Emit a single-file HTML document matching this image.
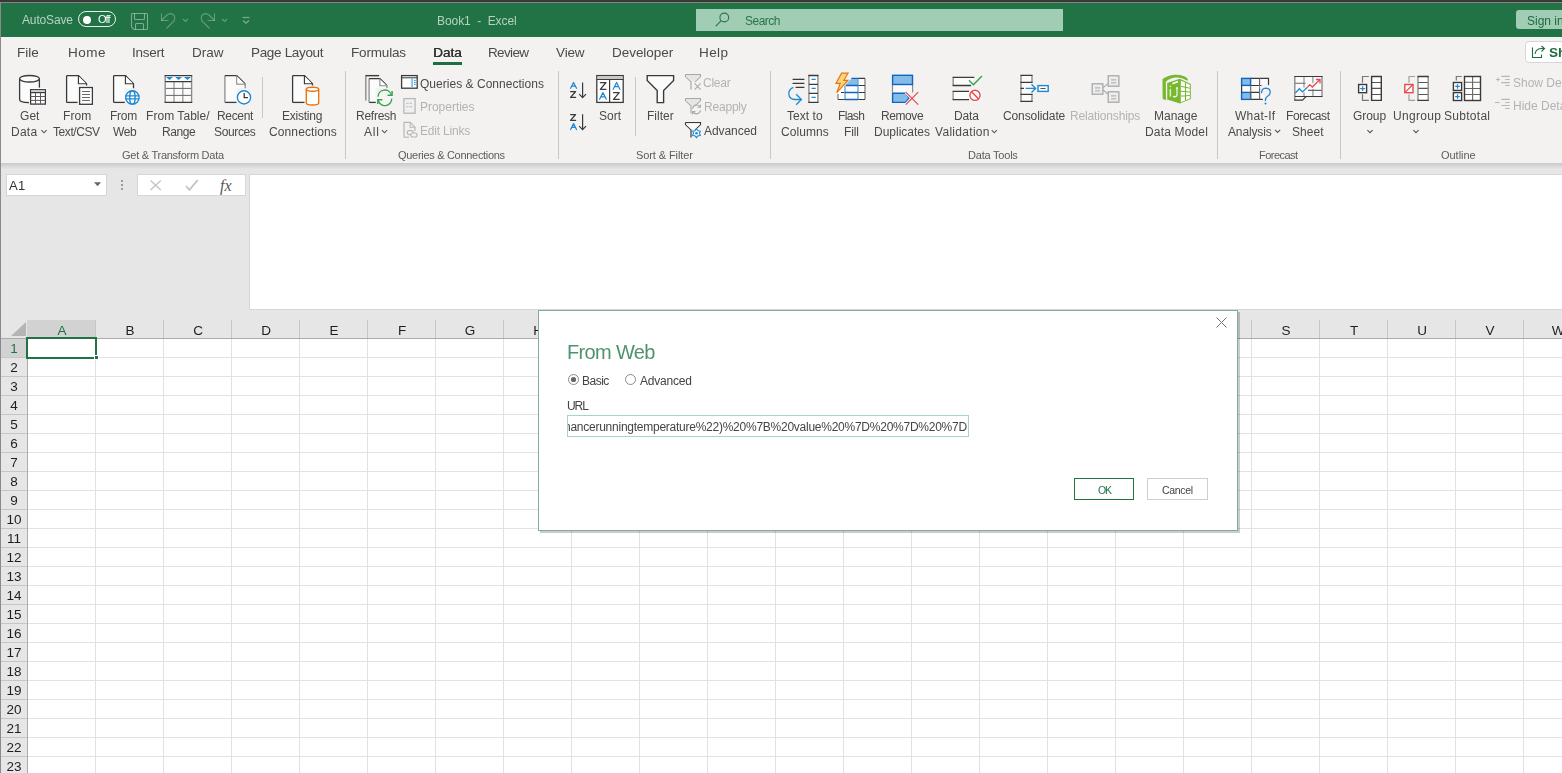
<!DOCTYPE html>
<html><head><meta charset="utf-8"><style>
html,body{margin:0;padding:0;width:1562px;height:773px;overflow:hidden;background:#fff;position:relative;font-family:"Liberation Sans", sans-serif}
.t{position:absolute;white-space:nowrap;font-family:"Liberation Sans", sans-serif;will-change:transform}
svg{overflow:visible}
</style></head><body>
<div style="position:absolute;left:0px;top:0px;width:1562px;height:2px;background:#393837"></div><div style="position:absolute;left:0px;top:2px;width:1562px;height:1px;background:#858585"></div><div style="position:absolute;left:1px;top:3px;width:1561px;height:34px;background:#217346"></div><div style="position:absolute;left:0px;top:2px;width:1px;height:771px;background:#8a8a8a"></div><div style="position:absolute;left:1px;top:37px;width:1561px;height:126px;background:#f3f2f1"></div><div style="position:absolute;left:433px;top:62px;width:29px;height:3px;background:#1e6e42"></div><div style="position:absolute;left:1px;top:163px;width:1561px;height:157px;background:#e6e6e6"></div><div style="position:absolute;left:1px;top:163px;width:1561px;height:6px;background:linear-gradient(#c9c9c9,#e6e6e6)"></div><div style="position:absolute;left:262px;top:77px;width:1px;height:41px;background:#c8c8c8"></div><div style="position:absolute;left:345px;top:71px;width:1px;height:88px;background:#c8c8c8"></div><div style="position:absolute;left:558px;top:71px;width:1px;height:88px;background:#c8c8c8"></div><div style="position:absolute;left:635px;top:77px;width:1px;height:59px;background:#c8c8c8"></div><div style="position:absolute;left:770px;top:71px;width:1px;height:88px;background:#c8c8c8"></div><div style="position:absolute;left:1217px;top:71px;width:1px;height:88px;background:#c8c8c8"></div><div style="position:absolute;left:1340px;top:71px;width:1px;height:88px;background:#c8c8c8"></div><div style="position:absolute;left:696px;top:9px;width:367px;height:22px;background:#a0cdb4"></div><div style="position:absolute;left:1516px;top:10px;width:60px;height:19px;background:#a0cdb4;border-radius:3px"></div><div style="position:absolute;left:1525px;top:41px;width:60px;height:22px;background:#ffffff;border:1px solid #d6d6d6;border-radius:4px;box-sizing:border-box"></div><div style="position:absolute;left:78px;top:11px;width:38px;height:16px;border:1.5px solid #e8f1ec;border-radius:8px;box-sizing:border-box"></div><div style="position:absolute;left:82.5px;top:15.5px;width:8px;height:8px;background:#ffffff;border-radius:50%"></div><div style="position:absolute;left:6px;top:174px;width:101px;height:22px;background:#fff;border:1px solid #d6d6d6;box-sizing:border-box"></div><div style="position:absolute;left:137px;top:174px;width:109px;height:22px;background:#fff;border:1px solid #d6d6d6;box-sizing:border-box"></div><div style="position:absolute;left:249px;top:174px;width:1313px;height:136px;background:#fff;border:1px solid #d6d6d6;border-right:none;box-sizing:border-box"></div>
<svg style="position:absolute;left:0;top:0" width="1562" height="200" viewBox="0 0 1562 200"><g fill="none" stroke="rgba(255,255,255,0.42)" stroke-width="1.1"><path d="M131.5 13.5 H146.5 Q147.5 13.5 147.5 14.5 V28.5 Q147.5 29.5 146.5 29.5 H134 L131.5 27 V14.5 Q131.5 13.5 132.5 13.5"/><path d="M134.5 13.5 V18.5 Q134.5 19.5 135.5 19.5 H143.5 Q144.5 19.5 144.5 18.5 V13.5"/><path d="M135.5 29.5 V24.5 Q135.5 23.5 136.5 23.5 H142.5 Q143.5 23.5 143.5 24.5 V29.5"/></g><g fill="none" stroke="rgba(255,255,255,0.30)" stroke-width="1.1"><path d="M161.5 13.5 V20.5 H168.5"/><path d="M161.5 20.5 L167 15 Q170 12.5 173 14.5 Q176 17 174 21 L166.5 28.5"/><path d="M183 19 L185.5 21.5 L188 19"/><path d="M214.5 13.5 V20.5 H207.5"/><path d="M214.5 20.5 L209 15 Q206 12.5 203 14.5 Q200 17 202 21 L209.5 28.5"/><path d="M222 19 L224.5 21.5 L227 19"/></g><g fill="none" stroke="rgba(255,255,255,0.42)" stroke-width="1.2"><path d="M242.5 17.5 H249.5"/><path d="M243 20.5 L246 23.2 L249 20.5"/></g><g fill="none" stroke="#2a744b" stroke-width="1.1"><circle cx="724.3" cy="17.5" r="4.4"/><path d="M721.2 20.6 L715.8 26.2"/></g><g fill="none" stroke="#1f6a40" stroke-width="1.1"><path d="M1532.5 47.5 V57.5 H1541.5 V54.5"/><path d="M1535 54 Q1536 48.5 1542 48.5 H1544"/><path d="M1541.5 46 L1544.5 48.5 L1541.5 51.5"/></g><g stroke="#3a3a3a" stroke-width="1.3" fill="#fbfbfb"><path d="M19.6 78.75 V99.5 Q21 102.6 29 102.6 H30 V89 H39.4 V78.75 Z" stroke="none"/><path d="M19.6 78.75 V99.5 Q19.6 102.6 29 102.6" fill="none"/><path d="M39.4 78.75 V87.6" fill="none"/><ellipse cx="29.5" cy="78.75" rx="9.9" ry="3.25"/></g><rect x="29.3" y="88.4" width="17.4" height="17" fill="#fdfdfd"/><rect x="30.6" y="89.7" width="14.8" height="14.4" fill="#fff" stroke="#3a3a3a" stroke-width="1.3"/><rect x="31.3" y="90.4" width="13.4" height="2" fill="#cfcfcf"/><g stroke="#5a5a5a" stroke-width="1"><path d="M30.6 92.6 H45.4" stroke="#3a3a3a" stroke-width="1.2"/><path d="M30.6 96.5 H45.4 M30.6 100.4 H45.4 M35.5 92.6 V104.1 M40.5 92.6 V104.1"/></g><path d="M66.6 75.6 H78.5 L86.6 83.69999999999999 V85.5 H77.6 V102.4 H66.6 Z" fill="#fbfbfb" stroke="none"/><path d="M77.6 102.4 H66.6" stroke="#3a3a3a" stroke-width="1.3" fill="none"/><path d="M66.6 102.4 V75.6" stroke="#3a3a3a" stroke-width="1.3" fill="none"/><path d="M66.6 75.6 H78.5 L86.6 83.69999999999999" stroke="#3a3a3a" stroke-width="1.3" fill="none" stroke-linejoin="miter"/><path d="M78.5 75.6 V83.69999999999999 H86.6" stroke="#3a3a3a" stroke-width="1.3" fill="none"/><path d="M79.1 76.8 L85.8 83.29999999999998 H79.1 Z" fill="#fff" stroke="none"/><path d="M86.6 83.69999999999999 V85.5" stroke="#3a3a3a" stroke-width="1.3" fill="none"/><rect x="78.3" y="86.2" width="15.4" height="19.4" fill="#fdfdfd"/><rect x="79.6" y="87.5" width="12.8" height="16.8" fill="#fff" stroke="#3a3a3a" stroke-width="1.3"/><g stroke="#6a6a6a" stroke-width="1"><path d="M82 91.5 H90 M82 94.5 H90 M82 97.5 H90 M82 100.5 H90"/></g><path d="M113.6 75.6 H125.5 L133.5 83.6 V88.3 H124.8 V102.4 H113.6 Z" fill="#fbfbfb" stroke="none"/><path d="M124.8 102.4 H113.6" stroke="#3a3a3a" stroke-width="1.3" fill="none"/><path d="M113.6 102.4 V75.6" stroke="#3a3a3a" stroke-width="1.3" fill="none"/><path d="M113.6 75.6 H125.5 L133.5 83.6" stroke="#3a3a3a" stroke-width="1.3" fill="none" stroke-linejoin="miter"/><path d="M125.5 75.6 V83.6 H133.5" stroke="#3a3a3a" stroke-width="1.3" fill="none"/><path d="M126.1 76.8 L132.7 83.19999999999999 H126.1 Z" fill="#fff" stroke="none"/><path d="M133.5 83.6 V88.3" stroke="#3a3a3a" stroke-width="1.3" fill="none"/><circle cx="132.4" cy="97.4" r="7.6" fill="#fdfdfd"/><g fill="#fff" stroke="#1e88d2" stroke-width="1.4"><circle cx="132.4" cy="97.4" r="6.7"/><ellipse cx="132.4" cy="97.4" rx="2.7" ry="6.7" fill="none"/><path d="M125.7 95.9 H139.1 M125.7 98.9 H139.1" fill="none"/></g><rect x="165.2" y="75.6" width="26.4" height="26.8" fill="#fbfbfb"/><rect x="165.8" y="76.2" width="25.2" height="5.2" fill="#fff"/><g stroke="#9a9a9a" stroke-width="1.3"><path d="M174 81.6 V102.4 M182.8 81.6 V102.4"/></g><g stroke="#666" stroke-width="1"><path d="M165.2 88.4 H191.6 M165.2 95.4 H191.6"/></g><g stroke="#8c8c8c" stroke-width="1.4"><path d="M165.2 75.6 V102.4 M191.6 75.6 V102.4"/></g><g stroke="#3a3a3a" stroke-width="1.3"><path d="M164.6 75.6 H192.2 M164.6 102.4 H192.2 M165.2 81.6 H191.6"/></g><g fill="#1e88d2"><path d="M166 77.1 H173 L169.5 80 Z M175.1 77.1 H182.1 L178.6 80 Z M184 77.1 H191 L187.5 80 Z"/></g><path d="M224.9 75.6 H236.8 L245.2 83.99999999999997 V88.3 H236.5 V102.4 H224.9 Z" fill="#fbfbfb" stroke="none"/><path d="M236.5 102.4 H224.9" stroke="#3a3a3a" stroke-width="1.3" fill="none"/><path d="M224.9 102.4 V75.6" stroke="#8c8c8c" stroke-width="1.3" fill="none"/><path d="M224.9 75.6 H236.8 L245.2 83.99999999999997" stroke="#3a3a3a" stroke-width="1.3" fill="none" stroke-linejoin="miter"/><path d="M236.8 75.6 V83.99999999999997 H245.2" stroke="#8c8c8c" stroke-width="1.3" fill="none"/><path d="M237.4 76.8 L244.39999999999998 83.59999999999997 H237.4 Z" fill="#fff" stroke="none"/><path d="M245.2 83.99999999999997 V88.3" stroke="#8c8c8c" stroke-width="1.3" fill="none"/><circle cx="244" cy="97.4" r="7.6" fill="#fdfdfd"/><circle cx="244" cy="97.4" r="6.6" fill="#fff" stroke="#1e88d2" stroke-width="1.4"/><path d="M244.2 93 V97.6 H248" fill="none" stroke="#3a3a3a" stroke-width="1.3"/><path d="M292.6 75.6 H304.5 L312.5 83.6 V85.5 H304.5 V102.4 H292.6 Z" fill="#fbfbfb" stroke="none"/><path d="M304.5 102.4 H292.6" stroke="#3a3a3a" stroke-width="1.3" fill="none"/><path d="M292.6 102.4 V75.6" stroke="#3a3a3a" stroke-width="1.3" fill="none"/><path d="M292.6 75.6 H304.5 L312.5 83.6" stroke="#3a3a3a" stroke-width="1.3" fill="none" stroke-linejoin="miter"/><path d="M304.5 75.6 V83.6 H312.5" stroke="#3a3a3a" stroke-width="1.3" fill="none"/><path d="M305.1 76.8 L311.7 83.19999999999999 H305.1 Z" fill="#fff" stroke="none"/><path d="M312.5 83.6 V85.5" stroke="#3a3a3a" stroke-width="1.3" fill="none"/><path d="M305.2 89.2 V103 Q312.5 106.5 319.8 103 V89.2 Z" fill="#fdfdfd"/><g stroke="#e8730f" stroke-width="1.4" fill="#fff"><path d="M306.3 89.2 V103 A6.2 2 0 0 0 318.7 103 V89.2"/><ellipse cx="312.5" cy="89.2" rx="6.2" ry="2"/></g><path d="M365.8 100.4 V75.6 H379.1" fill="none" stroke="#8c8c8c" stroke-width="1.4"/><path d="M365.8 75.6 H379.1" fill="none" stroke="#3a3a3a" stroke-width="1.3"/><path d="M369.1 78.6 H380 L387 85.6 V88 H375.8 V102.4 H369.1 Z" fill="#fbfbfb" stroke="none"/><path d="M375.8 102.4 H369.1" stroke="#3a3a3a" stroke-width="1.3" fill="none"/><path d="M369.1 102.4 V78.6" stroke="#8c8c8c" stroke-width="1.3" fill="none"/><path d="M369.1 78.6 H380 L387 85.6" stroke="#3a3a3a" stroke-width="1.3" fill="none" stroke-linejoin="miter"/><path d="M380 78.6 V85.6 H387" stroke="#8c8c8c" stroke-width="1.3" fill="none"/><path d="M380.6 79.8 L386.2 85.19999999999999 H380.6 Z" fill="#fff" stroke="none"/><path d="M387 85.6 V88" stroke="#8c8c8c" stroke-width="1.3" fill="none"/><circle cx="384.9" cy="97.4" r="7.8" fill="#f6f6f6"/><g fill="none" stroke="#34a24f" stroke-width="1.4"><path d="M378.1 96.7 A6.8 6.8 0 0 1 391.5 95.2"/><path d="M391.7 98.6 A6.8 6.8 0 0 1 378.2 100"/><path d="M392.1 91 V95.3 H387.6"/><path d="M377.8 104 V99.7 H382.4"/></g><rect x="401.6" y="75.6" width="15.6" height="12.6" fill="#fff" stroke="#3a3a3a" stroke-width="1.3"/><path d="M401.6 77.8 H417.2" stroke="#3a3a3a" stroke-width="1"/><rect x="411.3" y="78.2" width="1.7" height="9.4" fill="#83bbe9"/><g fill="#1e88d2"><rect x="414.2" y="79.9" width="1.4" height="1.1"/><rect x="414.2" y="81.9" width="1.4" height="1.1"/><rect x="414.2" y="83.8" width="1.4" height="1.1"/></g><rect x="403.9" y="98.6" width="11.2" height="14.6" fill="#f0f0f0" stroke="#b8b8b8" stroke-width="1.3"/><g stroke="#b8b8b8" stroke-width="1"><path d="M406.3 103.3 H408.6 M406.3 106.8 H408.6"/><path d="M409.6 103.3 H412 M409.6 106.8 H412"/></g><path d="M404 137.2 V122.4 H410.2 L415 127.2 V131" fill="#f0f0f0" stroke="#b8b8b8" stroke-width="1.2"/><path d="M410.2 122.4 V127.2 H415" fill="none" stroke="#b8b8b8" stroke-width="1.1"/><path d="M404 137.2 H409" stroke="#b8b8b8" stroke-width="1.2"/><g fill="#f3f2f1" stroke="#b8b8b8" stroke-width="1.1"><rect x="407.2" y="130.6" width="6.2" height="4" rx="2"/><rect x="410.8" y="133" width="6.2" height="4" rx="2"/></g><path d="M570.6 88.3 L573.55 82.5 L576.5 88.3 M571.721 86.096 H575.379" fill="none" stroke="#1e88d2" stroke-width="1.25" stroke-linecap="round" stroke-linejoin="round"/><path d="M570.6 91.5 H575.6 L570.6 97.4 H575.6" fill="none" stroke="#3a3a3a" stroke-width="1.25" stroke-linecap="round" stroke-linejoin="round"/><path d="M582.6 82.4 V97.4 M579.2 94.2 L582.6 97.6 L586 94.2" fill="none" stroke="#3a3a3a" stroke-width="1.2"/><path d="M570.6 114.5 H575.6 L570.6 120.4 H575.6" fill="none" stroke="#3a3a3a" stroke-width="1.25" stroke-linecap="round" stroke-linejoin="round"/><path d="M570.6 129.5 L573.55 123.6 L576.5 129.5 M571.721 127.258 H575.379" fill="none" stroke="#1e88d2" stroke-width="1.25" stroke-linecap="round" stroke-linejoin="round"/><path d="M582.6 114.2 V129.4 M579.2 126.2 L582.6 129.6 L586 126.2" fill="none" stroke="#3a3a3a" stroke-width="1.2"/><rect x="596.8" y="75.6" width="26.4" height="26.8" fill="#fff" stroke="#3a3a3a" stroke-width="1.3"/><rect x="597.5" y="76.3" width="25" height="2.9" fill="#c8c8c8"/><path d="M596.8 79.5 H623.2 M609.6 79.5 V102.4" stroke="#3a3a3a" stroke-width="1.2"/><path d="M600.3 82.5 H606 L600.3 89.3 H606" fill="none" stroke="#3a3a3a" stroke-width="1.25" stroke-linecap="round" stroke-linejoin="round"/><path d="M599.6 99.3 L602.95 92.6 L606.3 99.3 M600.873 96.75399999999999 H605.027" fill="none" stroke="#1e88d2" stroke-width="1.25" stroke-linecap="round" stroke-linejoin="round"/><path d="M613.2 89.3 L616.55 82.5 L619.9 89.3 M614.473 86.716 H618.627" fill="none" stroke="#1e88d2" stroke-width="1.25" stroke-linecap="round" stroke-linejoin="round"/><path d="M613.5 92.6 H619.2 L613.5 99.3 H619.2" fill="none" stroke="#3a3a3a" stroke-width="1.25" stroke-linecap="round" stroke-linejoin="round"/><path d="M647.2 75.6 H673.6 V80.4 L663.6 90.5 V102.6 H657.2 V90.5 L647.2 80.4 Z" fill="#fbfbfb" stroke="#3a3a3a" stroke-width="1.4" stroke-linejoin="miter"/><path d="M685.5 74.6 H700.5 V76.6 L695 81.8" fill="none" stroke="#a9a9a9" stroke-width="1.2"/><path d="M685.5 74.6 V76.6 L691 81.8 V89.4" fill="none" stroke="#a9a9a9" stroke-width="1.2"/><path d="M686.2 75.2 H699.8 V76.5 L695 81.2 H691 L686.2 76.5 Z" fill="#e6e6e6"/><path d="M694.6 83.4 L700.6 89.6 M700.6 83.4 L694.6 89.6" stroke="#a9a9a9" stroke-width="1.1"/><path d="M685.5 98.6 H700.5 V100.6 L695 105.8" fill="none" stroke="#a9a9a9" stroke-width="1.2"/><path d="M685.5 98.6 V100.6 L691 105.8 V113.4" fill="none" stroke="#a9a9a9" stroke-width="1.2"/><path d="M686.2 99.2 H699.8 V100.5 L695 105.2 H691 L686.2 100.5 Z" fill="#e6e6e6"/><g fill="none" stroke="#a9a9a9" stroke-width="1.1"><path d="M692.6 108.6 A4 4 0 0 1 699.8 106.6"/><path d="M700.4 110.2 A4 4 0 0 1 693.2 112.2"/><path d="M700.4 104.4 V107.2 H697.6"/><path d="M692.6 114.4 V111.6 H695.4"/></g><path d="M685.5 122.6 H700.5 V124.6 L695 129.8" fill="none" stroke="#3a3a3a" stroke-width="1.2"/><path d="M685.5 122.6 V124.6 L691 129.8 V137.4" fill="none" stroke="#3a3a3a" stroke-width="1.2"/><path d="M686.2 123.2 H699.8 V124.5 L695 129.2 H691 L686.2 124.5 Z" fill="#fbfbfb"/><path d="M696.50 128.90 L697.95 130.79 L700.31 131.10 L699.40 133.30 L700.31 135.50 L697.95 135.81 L696.50 137.70 L695.05 135.81 L692.69 135.50 L693.60 133.30 L692.69 131.10 L695.05 130.79 Z" fill="#fff" stroke="#1e88d2" stroke-width="1.1" stroke-linejoin="miter"/><circle cx="696.5" cy="133.3" r="1.3" fill="#1e88d2"/><g stroke="#3a3a3a" stroke-width="1.3"><path d="M792.6 79.3 H804.4 M792.6 83.4 H804.4 M795.6 87.4 H804.4"/></g><g fill="none" stroke="#1e88d2" stroke-width="1.3"><path d="M793.3 87.4 Q788.6 89.5 788.8 93.8 Q789.2 99.5 795 99.5 H801.4"/><path d="M796.2 94.3 L801.4 99.5 L796.2 104.7"/></g><rect x="808.9" y="75.5" width="9" height="26.9" fill="#fff"/><g stroke="#8c8c8c" stroke-width="1.4"><path d="M808.9 75.5 V102.4 M817.9 75.5 V102.4"/></g><g stroke="#3a3a3a" stroke-width="1.3"><path d="M808.3 75.5 H818.5 M808.3 102.4 H818.5 M808.9 84.3 H817.9 M808.9 93.4 H817.9"/></g><g stroke="#1e88d2" stroke-width="1.2"><path d="M811.5 79.3 H815.7 M811.5 88.4 H815.7 M811.5 97.3 H815.7"/></g><path d="M838 92 V99.5 H865 V78.4 H851.6 L845 85.5 H838 Z" fill="#fff"/><path d="M851.6 78.4 H858 V85.5 H845 Z" fill="#83bbe9"/><g stroke="#8c8c8c" stroke-width="1.4"><path d="M838 94 V99.5 M865 78.4 V99.5"/></g><g stroke="#3a3a3a" stroke-width="1.2"><path d="M838 99.5 H865 M858 78.4 H865 M858 85.5 H865 M858 92.5 H865 M841 92.5 H845"/></g><g stroke="#6aa8dd" stroke-width="1.4"><path d="M845 85.5 V99.5 M858 78.4 V99.5"/></g><g stroke="#1066bf" stroke-width="1.3"><path d="M851.4 78.4 H858 M846 85.5 H858 M845 92.5 H858 M845 99.5 H858"/></g><path d="M841.6 73.2 H848 L843.9 80.3 H848 L836.8 92.6 L840.2 83.3 H836 Z" fill="#f7d77a" stroke="#e8730f" stroke-width="1.2" stroke-linejoin="miter"/><path d="M892.6 84.5 V92.6 M912.5 84.5 V92.6" stroke="#8c8c8c" stroke-width="1.4"/><rect x="893.3" y="84.5" width="18.5" height="8.1" fill="#fafafa"/><rect x="892.6" y="75.3" width="19.9" height="9.2" fill="#83bbe9" stroke="#1066bf" stroke-width="1.4"/><path d="M892.6 93.2 H905.6 L909.1 98 L905.6 102.4 H892.6 Z" fill="#83bbe9" stroke="#1066bf" stroke-width="1.4" stroke-linejoin="miter"/><path d="M905.8 92.1 L918.2 104.6 M918.2 92.1 L905.8 104.6" stroke="#f4f3f2" stroke-width="3"/><path d="M905.8 92.1 L918.2 104.6 M918.2 92.1 L905.8 104.6" stroke="#e8474b" stroke-width="1.2"/><path d="M953.2 77.4 H974.3 L971 85.5 H953.2 Z" fill="#fbfbfb"/><path d="M953.2 77.4 V85.5 M953.2 91.4 V99.5" stroke="#8c8c8c" stroke-width="1.4"/><path d="M952.6 77.4 H974.3 M952.6 85.5 H971.1 M952.6 91.4 H969.1 M952.6 99.5 H969.1" stroke="#3a3a3a" stroke-width="1.3"/><rect x="953.8" y="92" width="15" height="7" fill="#fbfbfb"/><path d="M969 80.3 L973.4 84.7 L981.9 76.1" fill="none" stroke="#34a24f" stroke-width="1.4"/><circle cx="975" cy="95.3" r="6.6" fill="#fdfdfd"/><circle cx="975" cy="95.3" r="5.1" fill="#fff" stroke="#e8474b" stroke-width="1.4"/><path d="M971.5 91.8 L978.5 98.8" stroke="#e8474b" stroke-width="1.4"/><rect x="1021" y="75.5" width="11" height="26" fill="#fbfbfb"/><path d="M1021 75.4 V101.5 M1032 75.4 V82.3 M1032 94.3 V101.4" stroke="#8c8c8c" stroke-width="1.4"/><path d="M1020.4 75.4 H1032.6 M1020.4 82.3 H1032.6 M1020.4 94.3 H1032.6 M1020.4 101.4 H1032.6 M1020.4 88.4 H1024" stroke="#3a3a3a" stroke-width="1.3"/><path d="M1025.6 88.4 H1035.6 M1031.5 84.3 L1035.6 88.4 L1031.5 92.5" fill="none" stroke="#1e88d2" stroke-width="1.3"/><rect x="1038" y="85.6" width="10.2" height="5.8" fill="#fff" stroke="#1e88d2" stroke-width="1.4"/><path d="M1040.4 88.5 H1045.6" stroke="#555" stroke-width="1"/><rect x="1092.2" y="83.8" width="10.7" height="10.4" fill="#ededed" stroke="#a9a9a9" stroke-width="1.3"/><path d="M1095.0 87.89999999999999 H1100.2 M1095.0 90.89999999999999 H1100.2" stroke="#a0a0a0" stroke-width="0.9"/><rect x="1108.2" y="75.8" width="10.7" height="10.4" fill="#ededed" stroke="#a9a9a9" stroke-width="1.3"/><path d="M1111.0 79.89999999999999 H1116.2 M1111.0 82.89999999999999 H1116.2" stroke="#a0a0a0" stroke-width="0.9"/><rect x="1108.2" y="91.8" width="10.7" height="10.4" fill="#ededed" stroke="#a9a9a9" stroke-width="1.3"/><path d="M1111.0 95.89999999999999 H1116.2 M1111.0 98.89999999999999 H1116.2" stroke="#a0a0a0" stroke-width="0.9"/><path d="M1103 87.8 L1107.8 83.6 M1103 89.8 L1107.8 94" stroke="#a9a9a9" stroke-width="1.1"/><path d="M1162.5 79 Q1170 74.5 1176 74.8 Q1185 75 1188 79.3 L1187.6 80.8 Q1181 77 1175.5 77.5 Q1169 78 1165.8 82 L1166 100 L1171 101.8 L1162.6 99 Z" fill="#77b82f"/><path d="M1167.2 83 L1179.8 78.8 L1190.8 84 V99 L1179.8 103.6 L1167.2 99.6 Z" fill="#77b82f"/><path d="M1180.8 80.6 L1189.8 84.8 V98.4 L1180.8 102.3 Z" fill="#fff"/><path d="M1180.8 86.2 L1189.8 88.3 M1180.8 91.2 L1189.8 92 M1180.8 96 L1189.8 95.5 M1185.5 82.6 V100.5" stroke="#77b82f" stroke-width="1.1"/><path d="M1172.4 82.8 L1178 80.8 V82.6 L1172.4 84.6 Z" fill="#fff"/><rect x="1169.6" y="85.6" width="1.5" height="1.5" fill="#d9efc4"/><rect x="1169.6" y="88.9" width="1.5" height="7.7" fill="#d9efc4"/><path d="M1177 88 V95 Q1177 96.6 1175.4 96.6 H1173.6" fill="none" stroke="#fff" stroke-width="1.1"/><path d="M1175.6 88.6 L1177 86.8 L1178.4 88.6 Z M1174.4 95.4 L1172.8 96.6 L1174.4 97.8 Z" fill="#fff"/><rect x="1241.4" y="78.2" width="27" height="21.4" fill="#fbfbfb"/><rect x="1241.6" y="78.4" width="9" height="7" fill="#83bbe9" stroke="#1066bf" stroke-width="1.4"/><rect x="1241.6" y="92.4" width="9" height="7" fill="#83bbe9" stroke="#1066bf" stroke-width="1.4"/><path d="M1250.6 78.4 H1268.5 V85.5 M1250.6 85.5 H1268.5 M1241.6 85.5 V92.4 M1250.6 92.4 H1259.6 M1250.6 99.4 H1262.8" fill="none" stroke="#3a3a3a" stroke-width="1.2"/><path d="M1250.7 85.5 V99.4 M1259.6 78.4 V99.4" stroke="#666" stroke-width="1.1"/><path d="M1260.6 88 Q1262 86 1266 86 Q1270 86.3 1270 90 Q1270 92.4 1267.5 94 Q1265.4 95.4 1265.4 98 V100" fill="#f3f2f1" stroke="#f3f2f1" stroke-width="3.2"/><path d="M1261.6 93.3 Q1261.2 88.2 1266 88.2 Q1270.2 88.4 1270.2 92.4 Q1270.2 94.8 1267.6 96.2 Q1265.4 97.8 1265.4 100.2 V101" fill="none" stroke="#1e88d2" stroke-width="1.3"/><circle cx="1265.5" cy="103.4" r="1" fill="#1e88d2"/><path d="M1294.8 76.5 H1322 V96.5 H1306 L1302.5 100.2 H1294.8 Z" fill="#fbfbfb"/><path d="M1304 76.5 V87.6 M1304 92.6 V96.5 M1312.9 76.5 V83 M1312.9 89 V96.5" stroke="#9a9a9a" stroke-width="1.3"/><path d="M1294.8 83.2 H1305.5 M1308 90.4 H1322" stroke="#666" stroke-width="1.1"/><path d="M1294.8 76.5 V100.2 M1322 76.5 V96.5" stroke="#8c8c8c" stroke-width="1.4"/><path d="M1294.2 76.5 H1322.6 M1294.8 96.5 H1322.6 M1294.2 100.2 H1302.5 L1306 96.6" fill="none" stroke="#3a3a3a" stroke-width="1.2"/><path d="M1295.3 93 L1299.4 88.7 L1302.5 91.9 L1307.4 87.3" fill="none" stroke="#1e88d2" stroke-width="1.3"/><path d="M1307.4 87.3 L1309.7 84.6 L1312.3 87 L1319.8 79.6 M1316 79.5 H1320 V83.5" fill="none" stroke="#e8474b" stroke-width="1.3"/><path d="M1368.9 76.5 H1362.5 V82.8 M1362.5 94.3 V100.4 H1368.9" fill="none" stroke="#777" stroke-width="1.2"/><rect x="1371.6" y="76.5" width="9.700000000000045" height="23.900000000000006" fill="#fff"/><path d="M1371.6 82.5 H1381.3 M1371.6 88.4 H1381.3 M1371.6 94.5 H1381.3 " stroke="#555" stroke-width="1.1"/><path d="M1371.6 76.5 V100.4 M1381.3 76.5 V100.4" stroke="#3a3a3a" stroke-width="1.4"/><path d="M1371.0 76.5 H1381.8999999999999 M1371.0 100.4 H1381.8999999999999" stroke="#3a3a3a" stroke-width="1.3"/><rect x="1358.6" y="84.5" width="8" height="8.2" fill="#fff" stroke="#3a3a3a" stroke-width="1.4"/><path d="M1362.6 86.2 V91 M1360.2 88.6 H1365" stroke="#1e88d2" stroke-width="1.2"/><path d="M1415.1 76.5 H1409 V82.8 M1409 94.3 V100.4 H1415.1" fill="none" stroke="#a0a0a0" stroke-width="1.2"/><rect x="1418" y="76.5" width="10.200000000000045" height="23.900000000000006" fill="#fff"/><path d="M1418 82.5 H1428.2 M1418 88.4 H1428.2 M1418 94.5 H1428.2 " stroke="#555" stroke-width="1.1"/><path d="M1418 76.5 V100.4 M1428.2 76.5 V100.4" stroke="#8c8c8c" stroke-width="1.4"/><path d="M1417.4 76.5 H1428.8 M1417.4 100.4 H1428.8" stroke="#3a3a3a" stroke-width="1.3"/><rect x="1404.8" y="84.5" width="8.2" height="8.2" fill="#fff" stroke="#e8474b" stroke-width="1.4"/><path d="M1405 92.4 L1412.8 84.7" stroke="#e8474b" stroke-width="1.2"/><path d="M1461.7 76.5 H1456.3 V80.5" fill="none" stroke="#777" stroke-width="1.2"/><rect x="1464.5" y="76.5" width="16" height="24" fill="#fff"/><path d="M1464.5 82.3 H1480.5 M1464.5 88.5 H1480.5 M1464.5 94.5 H1480.5 M1472.6 76.5 V100.5" stroke="#666" stroke-width="1.1"/><rect x="1464.5" y="76.5" width="16" height="24" fill="none" stroke="#3a3a3a" stroke-width="1.4"/><rect x="1453.4" y="82.5" width="8.2" height="7.9" fill="#fff" stroke="#3a3a3a" stroke-width="1.4"/><path d="M1457.5 84.2 V88.7 M1455.2 86.45 H1459.8" stroke="#1e88d2" stroke-width="1.2"/><rect x="1453.4" y="92.6" width="8.2" height="7.9" fill="#fff" stroke="#3a3a3a" stroke-width="1.4"/><path d="M1457.5 94.3 V98.8 M1455.2 96.55 H1459.8" stroke="#1e88d2" stroke-width="1.2"/><g stroke="#b8b8b8" stroke-width="1.1"><path d="M1496 79.5 H1500 M1498 77.5 V81.5"/><path d="M1501.3 76.4 H1509.8 M1505.2 79.5 H1509.8 M1501.3 82.6 H1509.8 M1505.2 85.5 H1509.8"/><path d="M1495 102.5 H1499.7"/><path d="M1501.3 99.4 H1509.8 M1505.2 102.5 H1509.8 M1501.3 105.5 H1509.8 M1505.2 108.5 H1509.8"/></g><path d="M41.4 130.2 L44 132.79999999999998 L46.6 130.2" fill="none" stroke="#555" stroke-width="1.1"/><path d="M381.9 130.2 L384.5 132.79999999999998 L387.1 130.2" fill="none" stroke="#555" stroke-width="1.1"/><path d="M991.6999999999999 130.2 L994.3 132.79999999999998 L996.9 130.2" fill="none" stroke="#555" stroke-width="1.1"/><path d="M1275.0 129.9 L1277.6 132.5 L1280.1999999999998 129.9" fill="none" stroke="#555" stroke-width="1.1"/><path d="M1367.4 130.1 L1370 132.7 L1372.6 130.1" fill="none" stroke="#555" stroke-width="1.1"/><path d="M1413.4 130.1 L1416 132.7 L1418.6 130.1" fill="none" stroke="#555" stroke-width="1.1"/><path d="M94 182.2 H101 L97.5 186.2 Z" fill="#666"/><g fill="#9a9a9a"><rect x="121" y="180" width="2" height="2"/><rect x="121" y="184" width="2" height="2"/><rect x="121" y="188" width="2" height="2"/></g><path d="M150.5 180.5 L160.8 190 M160.8 180.5 L150.5 190" stroke="#c4c4c4" stroke-width="1.4"/><path d="M186 186 L189.5 189.8 L197.6 180.2" fill="none" stroke="#c4c4c4" stroke-width="1.8"/><text x="220" y="190.5" font-family="Liberation Serif" font-style="italic" font-size="16" fill="#5a5a5a">fx</text></svg>
<div style="position:absolute;left:28px;top:339px;width:1534px;height:434px;background:#ffffff"></div><div style="position:absolute;left:1px;top:320px;width:1561px;height:18px;background:#e6e6e6"></div><div style="position:absolute;left:27px;top:320px;width:68px;height:18px;background:#d2d2d2"></div><div style="position:absolute;left:1px;top:338px;width:26px;height:435px;background:#e6e6e6"></div><div style="position:absolute;left:1px;top:338px;width:26px;height:19px;background:#d2d2d2"></div><div style="position:absolute;left:95px;top:320px;width:1px;height:18px;background:#c6c6c6"></div><div style="position:absolute;left:95px;top:338px;width:1px;height:435px;background:#e2e2e2"></div><div style="position:absolute;left:163px;top:320px;width:1px;height:18px;background:#c6c6c6"></div><div style="position:absolute;left:163px;top:338px;width:1px;height:435px;background:#e2e2e2"></div><div style="position:absolute;left:231px;top:320px;width:1px;height:18px;background:#c6c6c6"></div><div style="position:absolute;left:231px;top:338px;width:1px;height:435px;background:#e2e2e2"></div><div style="position:absolute;left:299px;top:320px;width:1px;height:18px;background:#c6c6c6"></div><div style="position:absolute;left:299px;top:338px;width:1px;height:435px;background:#e2e2e2"></div><div style="position:absolute;left:367px;top:320px;width:1px;height:18px;background:#c6c6c6"></div><div style="position:absolute;left:367px;top:338px;width:1px;height:435px;background:#e2e2e2"></div><div style="position:absolute;left:435px;top:320px;width:1px;height:18px;background:#c6c6c6"></div><div style="position:absolute;left:435px;top:338px;width:1px;height:435px;background:#e2e2e2"></div><div style="position:absolute;left:503px;top:320px;width:1px;height:18px;background:#c6c6c6"></div><div style="position:absolute;left:503px;top:338px;width:1px;height:435px;background:#e2e2e2"></div><div style="position:absolute;left:571px;top:320px;width:1px;height:18px;background:#c6c6c6"></div><div style="position:absolute;left:571px;top:338px;width:1px;height:435px;background:#e2e2e2"></div><div style="position:absolute;left:639px;top:320px;width:1px;height:18px;background:#c6c6c6"></div><div style="position:absolute;left:639px;top:338px;width:1px;height:435px;background:#e2e2e2"></div><div style="position:absolute;left:707px;top:320px;width:1px;height:18px;background:#c6c6c6"></div><div style="position:absolute;left:707px;top:338px;width:1px;height:435px;background:#e2e2e2"></div><div style="position:absolute;left:775px;top:320px;width:1px;height:18px;background:#c6c6c6"></div><div style="position:absolute;left:775px;top:338px;width:1px;height:435px;background:#e2e2e2"></div><div style="position:absolute;left:843px;top:320px;width:1px;height:18px;background:#c6c6c6"></div><div style="position:absolute;left:843px;top:338px;width:1px;height:435px;background:#e2e2e2"></div><div style="position:absolute;left:911px;top:320px;width:1px;height:18px;background:#c6c6c6"></div><div style="position:absolute;left:911px;top:338px;width:1px;height:435px;background:#e2e2e2"></div><div style="position:absolute;left:979px;top:320px;width:1px;height:18px;background:#c6c6c6"></div><div style="position:absolute;left:979px;top:338px;width:1px;height:435px;background:#e2e2e2"></div><div style="position:absolute;left:1047px;top:320px;width:1px;height:18px;background:#c6c6c6"></div><div style="position:absolute;left:1047px;top:338px;width:1px;height:435px;background:#e2e2e2"></div><div style="position:absolute;left:1115px;top:320px;width:1px;height:18px;background:#c6c6c6"></div><div style="position:absolute;left:1115px;top:338px;width:1px;height:435px;background:#e2e2e2"></div><div style="position:absolute;left:1183px;top:320px;width:1px;height:18px;background:#c6c6c6"></div><div style="position:absolute;left:1183px;top:338px;width:1px;height:435px;background:#e2e2e2"></div><div style="position:absolute;left:1251px;top:320px;width:1px;height:18px;background:#c6c6c6"></div><div style="position:absolute;left:1251px;top:338px;width:1px;height:435px;background:#e2e2e2"></div><div style="position:absolute;left:1319px;top:320px;width:1px;height:18px;background:#c6c6c6"></div><div style="position:absolute;left:1319px;top:338px;width:1px;height:435px;background:#e2e2e2"></div><div style="position:absolute;left:1387px;top:320px;width:1px;height:18px;background:#c6c6c6"></div><div style="position:absolute;left:1387px;top:338px;width:1px;height:435px;background:#e2e2e2"></div><div style="position:absolute;left:1455px;top:320px;width:1px;height:18px;background:#c6c6c6"></div><div style="position:absolute;left:1455px;top:338px;width:1px;height:435px;background:#e2e2e2"></div><div style="position:absolute;left:1523px;top:320px;width:1px;height:18px;background:#c6c6c6"></div><div style="position:absolute;left:1523px;top:338px;width:1px;height:435px;background:#e2e2e2"></div><div style="position:absolute;left:1591px;top:320px;width:1px;height:18px;background:#c6c6c6"></div><div style="position:absolute;left:1591px;top:338px;width:1px;height:435px;background:#e2e2e2"></div><div style="position:absolute;left:27px;top:357px;width:1535px;height:1px;background:#e2e2e2"></div><div style="position:absolute;left:1px;top:357px;width:26px;height:1px;background:#c6c6c6"></div><div style="position:absolute;left:27px;top:376px;width:1535px;height:1px;background:#e2e2e2"></div><div style="position:absolute;left:1px;top:376px;width:26px;height:1px;background:#c6c6c6"></div><div style="position:absolute;left:27px;top:395px;width:1535px;height:1px;background:#e2e2e2"></div><div style="position:absolute;left:1px;top:395px;width:26px;height:1px;background:#c6c6c6"></div><div style="position:absolute;left:27px;top:414px;width:1535px;height:1px;background:#e2e2e2"></div><div style="position:absolute;left:1px;top:414px;width:26px;height:1px;background:#c6c6c6"></div><div style="position:absolute;left:27px;top:433px;width:1535px;height:1px;background:#e2e2e2"></div><div style="position:absolute;left:1px;top:433px;width:26px;height:1px;background:#c6c6c6"></div><div style="position:absolute;left:27px;top:452px;width:1535px;height:1px;background:#e2e2e2"></div><div style="position:absolute;left:1px;top:452px;width:26px;height:1px;background:#c6c6c6"></div><div style="position:absolute;left:27px;top:471px;width:1535px;height:1px;background:#e2e2e2"></div><div style="position:absolute;left:1px;top:471px;width:26px;height:1px;background:#c6c6c6"></div><div style="position:absolute;left:27px;top:490px;width:1535px;height:1px;background:#e2e2e2"></div><div style="position:absolute;left:1px;top:490px;width:26px;height:1px;background:#c6c6c6"></div><div style="position:absolute;left:27px;top:509px;width:1535px;height:1px;background:#e2e2e2"></div><div style="position:absolute;left:1px;top:509px;width:26px;height:1px;background:#c6c6c6"></div><div style="position:absolute;left:27px;top:528px;width:1535px;height:1px;background:#e2e2e2"></div><div style="position:absolute;left:1px;top:528px;width:26px;height:1px;background:#c6c6c6"></div><div style="position:absolute;left:27px;top:547px;width:1535px;height:1px;background:#e2e2e2"></div><div style="position:absolute;left:1px;top:547px;width:26px;height:1px;background:#c6c6c6"></div><div style="position:absolute;left:27px;top:566px;width:1535px;height:1px;background:#e2e2e2"></div><div style="position:absolute;left:1px;top:566px;width:26px;height:1px;background:#c6c6c6"></div><div style="position:absolute;left:27px;top:585px;width:1535px;height:1px;background:#e2e2e2"></div><div style="position:absolute;left:1px;top:585px;width:26px;height:1px;background:#c6c6c6"></div><div style="position:absolute;left:27px;top:604px;width:1535px;height:1px;background:#e2e2e2"></div><div style="position:absolute;left:1px;top:604px;width:26px;height:1px;background:#c6c6c6"></div><div style="position:absolute;left:27px;top:623px;width:1535px;height:1px;background:#e2e2e2"></div><div style="position:absolute;left:1px;top:623px;width:26px;height:1px;background:#c6c6c6"></div><div style="position:absolute;left:27px;top:642px;width:1535px;height:1px;background:#e2e2e2"></div><div style="position:absolute;left:1px;top:642px;width:26px;height:1px;background:#c6c6c6"></div><div style="position:absolute;left:27px;top:661px;width:1535px;height:1px;background:#e2e2e2"></div><div style="position:absolute;left:1px;top:661px;width:26px;height:1px;background:#c6c6c6"></div><div style="position:absolute;left:27px;top:680px;width:1535px;height:1px;background:#e2e2e2"></div><div style="position:absolute;left:1px;top:680px;width:26px;height:1px;background:#c6c6c6"></div><div style="position:absolute;left:27px;top:699px;width:1535px;height:1px;background:#e2e2e2"></div><div style="position:absolute;left:1px;top:699px;width:26px;height:1px;background:#c6c6c6"></div><div style="position:absolute;left:27px;top:718px;width:1535px;height:1px;background:#e2e2e2"></div><div style="position:absolute;left:1px;top:718px;width:26px;height:1px;background:#c6c6c6"></div><div style="position:absolute;left:27px;top:737px;width:1535px;height:1px;background:#e2e2e2"></div><div style="position:absolute;left:1px;top:737px;width:26px;height:1px;background:#c6c6c6"></div><div style="position:absolute;left:27px;top:756px;width:1535px;height:1px;background:#e2e2e2"></div><div style="position:absolute;left:1px;top:756px;width:26px;height:1px;background:#c6c6c6"></div><div style="position:absolute;left:27px;top:775px;width:1535px;height:1px;background:#e2e2e2"></div><div style="position:absolute;left:1px;top:775px;width:26px;height:1px;background:#c6c6c6"></div><div style="position:absolute;left:1px;top:338px;width:1561px;height:1px;background:#ababab"></div><div style="position:absolute;left:27px;top:338px;width:1px;height:435px;background:#ababab"></div><svg style="position:absolute;left:8px;top:322px;" width="19" height="15" viewBox="0 0 19 15"><path d="M18 0 L18 14 L3 14 Z" fill="#b4b4b4"/></svg><span class="t c" style="left:42px;width:40px;text-align:center;top:324.37px;font-size:13.5px;line-height:13.5px;color:#217346">A</span><span class="t c" style="left:110px;width:40px;text-align:center;top:324.37px;font-size:13.5px;line-height:13.5px;color:#1e1e1e">B</span><span class="t c" style="left:178px;width:40px;text-align:center;top:324.37px;font-size:13.5px;line-height:13.5px;color:#1e1e1e">C</span><span class="t c" style="left:246px;width:40px;text-align:center;top:324.37px;font-size:13.5px;line-height:13.5px;color:#1e1e1e">D</span><span class="t c" style="left:314px;width:40px;text-align:center;top:324.37px;font-size:13.5px;line-height:13.5px;color:#1e1e1e">E</span><span class="t c" style="left:382px;width:40px;text-align:center;top:324.37px;font-size:13.5px;line-height:13.5px;color:#1e1e1e">F</span><span class="t c" style="left:450px;width:40px;text-align:center;top:324.37px;font-size:13.5px;line-height:13.5px;color:#1e1e1e">G</span><span class="t c" style="left:518px;width:40px;text-align:center;top:324.37px;font-size:13.5px;line-height:13.5px;color:#1e1e1e">H</span><span class="t c" style="left:586px;width:40px;text-align:center;top:324.37px;font-size:13.5px;line-height:13.5px;color:#1e1e1e">I</span><span class="t c" style="left:654px;width:40px;text-align:center;top:324.37px;font-size:13.5px;line-height:13.5px;color:#1e1e1e">J</span><span class="t c" style="left:722px;width:40px;text-align:center;top:324.37px;font-size:13.5px;line-height:13.5px;color:#1e1e1e">K</span><span class="t c" style="left:790px;width:40px;text-align:center;top:324.37px;font-size:13.5px;line-height:13.5px;color:#1e1e1e">L</span><span class="t c" style="left:858px;width:40px;text-align:center;top:324.37px;font-size:13.5px;line-height:13.5px;color:#1e1e1e">M</span><span class="t c" style="left:926px;width:40px;text-align:center;top:324.37px;font-size:13.5px;line-height:13.5px;color:#1e1e1e">N</span><span class="t c" style="left:994px;width:40px;text-align:center;top:324.37px;font-size:13.5px;line-height:13.5px;color:#1e1e1e">O</span><span class="t c" style="left:1062px;width:40px;text-align:center;top:324.37px;font-size:13.5px;line-height:13.5px;color:#1e1e1e">P</span><span class="t c" style="left:1130px;width:40px;text-align:center;top:324.37px;font-size:13.5px;line-height:13.5px;color:#1e1e1e">Q</span><span class="t c" style="left:1198px;width:40px;text-align:center;top:324.37px;font-size:13.5px;line-height:13.5px;color:#1e1e1e">R</span><span class="t c" style="left:1266px;width:40px;text-align:center;top:324.37px;font-size:13.5px;line-height:13.5px;color:#1e1e1e">S</span><span class="t c" style="left:1334px;width:40px;text-align:center;top:324.37px;font-size:13.5px;line-height:13.5px;color:#1e1e1e">T</span><span class="t c" style="left:1402px;width:40px;text-align:center;top:324.37px;font-size:13.5px;line-height:13.5px;color:#1e1e1e">U</span><span class="t c" style="left:1470px;width:40px;text-align:center;top:324.37px;font-size:13.5px;line-height:13.5px;color:#1e1e1e">V</span><span class="t c" style="left:1538px;width:40px;text-align:center;top:324.37px;font-size:13.5px;line-height:13.5px;color:#1e1e1e">W</span><span class="t c" style="left:1px;width:26px;text-align:center;top:342.37px;font-size:13.5px;line-height:13.5px;color:#217346">1</span><span class="t c" style="left:1px;width:26px;text-align:center;top:361.37px;font-size:13.5px;line-height:13.5px;color:#1e1e1e">2</span><span class="t c" style="left:1px;width:26px;text-align:center;top:380.37px;font-size:13.5px;line-height:13.5px;color:#1e1e1e">3</span><span class="t c" style="left:1px;width:26px;text-align:center;top:399.37px;font-size:13.5px;line-height:13.5px;color:#1e1e1e">4</span><span class="t c" style="left:1px;width:26px;text-align:center;top:418.37px;font-size:13.5px;line-height:13.5px;color:#1e1e1e">5</span><span class="t c" style="left:1px;width:26px;text-align:center;top:437.37px;font-size:13.5px;line-height:13.5px;color:#1e1e1e">6</span><span class="t c" style="left:1px;width:26px;text-align:center;top:456.37px;font-size:13.5px;line-height:13.5px;color:#1e1e1e">7</span><span class="t c" style="left:1px;width:26px;text-align:center;top:475.37px;font-size:13.5px;line-height:13.5px;color:#1e1e1e">8</span><span class="t c" style="left:1px;width:26px;text-align:center;top:494.37px;font-size:13.5px;line-height:13.5px;color:#1e1e1e">9</span><span class="t c" style="left:1px;width:26px;text-align:center;top:513.37px;font-size:13.5px;line-height:13.5px;color:#1e1e1e">10</span><span class="t c" style="left:1px;width:26px;text-align:center;top:532.37px;font-size:13.5px;line-height:13.5px;color:#1e1e1e">11</span><span class="t c" style="left:1px;width:26px;text-align:center;top:551.37px;font-size:13.5px;line-height:13.5px;color:#1e1e1e">12</span><span class="t c" style="left:1px;width:26px;text-align:center;top:570.37px;font-size:13.5px;line-height:13.5px;color:#1e1e1e">13</span><span class="t c" style="left:1px;width:26px;text-align:center;top:589.37px;font-size:13.5px;line-height:13.5px;color:#1e1e1e">14</span><span class="t c" style="left:1px;width:26px;text-align:center;top:608.37px;font-size:13.5px;line-height:13.5px;color:#1e1e1e">15</span><span class="t c" style="left:1px;width:26px;text-align:center;top:627.37px;font-size:13.5px;line-height:13.5px;color:#1e1e1e">16</span><span class="t c" style="left:1px;width:26px;text-align:center;top:646.37px;font-size:13.5px;line-height:13.5px;color:#1e1e1e">17</span><span class="t c" style="left:1px;width:26px;text-align:center;top:665.37px;font-size:13.5px;line-height:13.5px;color:#1e1e1e">18</span><span class="t c" style="left:1px;width:26px;text-align:center;top:684.37px;font-size:13.5px;line-height:13.5px;color:#1e1e1e">19</span><span class="t c" style="left:1px;width:26px;text-align:center;top:703.37px;font-size:13.5px;line-height:13.5px;color:#1e1e1e">20</span><span class="t c" style="left:1px;width:26px;text-align:center;top:722.37px;font-size:13.5px;line-height:13.5px;color:#1e1e1e">21</span><span class="t c" style="left:1px;width:26px;text-align:center;top:741.37px;font-size:13.5px;line-height:13.5px;color:#1e1e1e">22</span><span class="t c" style="left:1px;width:26px;text-align:center;top:760.37px;font-size:13.5px;line-height:13.5px;color:#1e1e1e">23</span><div style="position:absolute;left:26px;top:337px;width:71px;height:22px;border:2px solid #217346;box-sizing:border-box"></div><div style="position:absolute;left:94px;top:355px;width:5px;height:5px;background:#217346;border:1px solid #fff;box-sizing:border-box"></div>
<div style="position:absolute;left:539.5px;top:311.5px;width:700px;height:221px;background:rgba(0,0,0,0.2);filter:blur(0.7px)"></div><div style="position:absolute;left:538px;top:310px;width:700px;height:221px;background:#fff;border:1px solid #7fae95;box-sizing:border-box"></div><svg style="position:absolute;left:1216px;top:317px;" width="11" height="11" viewBox="0 0 11 11"><path d="M0.5 0.5 L10.5 10.5 M10.5 0.5 L0.5 10.5" stroke="#777" stroke-width="1"/></svg><svg style="position:absolute;left:567px;top:373px;" width="13" height="13" viewBox="0 0 13 13"><circle cx="6.5" cy="6.5" r="5" fill="#fff" stroke="#8a8a8a" stroke-width="1"/><circle cx="6.5" cy="6.5" r="2.6" fill="#666"/></svg><svg style="position:absolute;left:624px;top:373px;" width="13" height="13" viewBox="0 0 13 13"><circle cx="6.5" cy="6.5" r="5" fill="#fff" stroke="#8a8a8a" stroke-width="1"/></svg><div style="position:absolute;left:567px;top:415px;width:402px;height:22px;background:#fff;border:1px solid #a6d6bb;box-sizing:border-box;overflow:hidden"></div><div style="position:absolute;left:568px;top:416px;width:400px;height:20px;overflow:hidden"><span id="urltxt" class="t" style="right:1px;top:5.44px;font-size:12px;line-height:12px;letter-spacing:-0.25px;color:#444">hancerunningtemperature%22)%20%7B%20value%20%7D%20%7D%20%7D</span></div><div style="position:absolute;left:1074px;top:478px;width:60px;height:22px;background:#fff;border:1.5px solid #217346;box-sizing:border-box"></div><div style="position:absolute;left:1147px;top:478px;width:61px;height:22px;background:#fff;border:1.5px solid #cfcfcf;box-sizing:border-box"></div>
<span id="t0" class="t" style="left:22.00px;top:14.34px;font-size:12px;line-height:12px;color:#b5d3c0;letter-spacing:-0.143px;">AutoSave</span>
<span id="t1" class="t" style="left:98.00px;top:14.39px;font-size:11px;line-height:11px;color:#ffffff;letter-spacing:-1.000px;">Off</span>
<span id="t2" class="t" style="left:437.00px;top:14.64px;font-size:12px;line-height:12px;color:#b5d3c0;letter-spacing:-0.071px;">Book1 &nbsp;- &nbsp;Excel</span>
<span id="t3" class="t" style="left:745.20px;top:14.54px;font-size:12px;line-height:12px;color:#2a744b;letter-spacing:-0.500px;">Search</span>
<span id="t4" class="t" style="left:1527.00px;top:15.04px;font-size:12px;line-height:12px;color:#1f6a40;">Sign in</span>
<span id="t5" class="t" style="left:17.20px;top:45.57px;font-size:13.5px;line-height:13.5px;color:#4a4a4a;letter-spacing:-0.033px;">File</span>
<span id="t6" class="t" style="left:68.20px;top:45.57px;font-size:13.5px;line-height:13.5px;color:#4a4a4a;letter-spacing:0.467px;">Home</span>
<span id="t7" class="t" style="left:132.40px;top:45.57px;font-size:13.5px;line-height:13.5px;color:#4a4a4a;letter-spacing:-0.260px;">Insert</span>
<span id="t8" class="t" style="left:191.80px;top:45.57px;font-size:13.5px;line-height:13.5px;color:#4a4a4a;letter-spacing:0.033px;">Draw</span>
<span id="t9" class="t" style="left:251.00px;top:45.57px;font-size:13.5px;line-height:13.5px;color:#4a4a4a;letter-spacing:-0.330px;">Page Layout</span>
<span id="t10" class="t" style="left:351.20px;top:45.57px;font-size:13.5px;line-height:13.5px;color:#4a4a4a;letter-spacing:-0.171px;">Formulas</span>
<span id="t11" class="t" style="left:432.80px;top:45.57px;font-size:13.5px;line-height:13.5px;color:#333333;text-shadow:0.45px 0 0 #333;">Data</span>
<span id="t12" class="t" style="left:488.40px;top:45.57px;font-size:13.5px;line-height:13.5px;color:#4a4a4a;letter-spacing:-0.640px;">Review</span>
<span id="t13" class="t" style="left:556.20px;top:45.57px;font-size:13.5px;line-height:13.5px;color:#4a4a4a;letter-spacing:-0.133px;">View</span>
<span id="t14" class="t" style="left:611.60px;top:45.57px;font-size:13.5px;line-height:13.5px;color:#4a4a4a;letter-spacing:-0.037px;">Developer</span>
<span id="t15" class="t" style="left:699.00px;top:45.57px;font-size:13.5px;line-height:13.5px;color:#4a4a4a;letter-spacing:0.400px;">Help</span>
<span id="t16" class="t" style="left:1549.00px;top:46.07px;font-size:13.5px;line-height:13.5px;color:#1f6a40;font-weight:bold;">Sh</span>
<span id="t17" class="t" style="left:19.80px;top:109.64px;font-size:12px;line-height:12px;color:#4a4a4a;letter-spacing:0.050px;">Get</span>
<span id="t18" class="t" style="left:11.40px;top:125.54px;font-size:12px;line-height:12px;color:#4a4a4a;letter-spacing:0.267px;">Data</span>
<span id="t19" class="t" style="left:62.80px;top:109.64px;font-size:12px;line-height:12px;color:#4a4a4a;letter-spacing:0.067px;">From</span>
<span id="t20" class="t" style="left:53.00px;top:125.54px;font-size:12px;line-height:12px;color:#4a4a4a;letter-spacing:-0.414px;">Text/CSV</span>
<span id="t21" class="t" style="left:110.00px;top:109.64px;font-size:12px;line-height:12px;color:#4a4a4a;letter-spacing:-0.233px;">From</span>
<span id="t22" class="t" style="left:112.60px;top:125.54px;font-size:12px;line-height:12px;color:#4a4a4a;letter-spacing:-0.450px;">Web</span>
<span id="t23" class="t" style="left:146.40px;top:109.64px;font-size:12px;line-height:12px;color:#4a4a4a;letter-spacing:0.050px;">From Table/</span>
<span id="t24" class="t" style="left:162.20px;top:125.54px;font-size:12px;line-height:12px;color:#4a4a4a;letter-spacing:-0.400px;">Range</span>
<span id="t25" class="t" style="left:216.80px;top:109.64px;font-size:12px;line-height:12px;color:#4a4a4a;letter-spacing:-0.340px;">Recent</span>
<span id="t26" class="t" style="left:214.40px;top:125.54px;font-size:12px;line-height:12px;color:#4a4a4a;letter-spacing:-0.367px;">Sources</span>
<span id="t27" class="t" style="left:282.20px;top:109.64px;font-size:12px;line-height:12px;color:#4a4a4a;letter-spacing:-0.229px;">Existing</span>
<span id="t28" class="t" style="left:269.00px;top:125.54px;font-size:12px;line-height:12px;color:#4a4a4a;letter-spacing:0.110px;">Connections</span>
<span id="t29" class="t" style="left:355.80px;top:109.64px;font-size:12px;line-height:12px;color:#4a4a4a;letter-spacing:-0.250px;">Refresh</span>
<span id="t30" class="t" style="left:364.40px;top:125.54px;font-size:12px;line-height:12px;color:#4a4a4a;letter-spacing:0.800px;">All</span>
<span id="t31" class="t" style="left:598.60px;top:109.64px;font-size:12px;line-height:12px;color:#4a4a4a;">Sort</span>
<span id="t32" class="t" style="left:647.00px;top:109.64px;font-size:12px;line-height:12px;color:#4a4a4a;letter-spacing:0.020px;">Filter</span>
<span id="t33" class="t" style="left:786.80px;top:109.64px;font-size:12px;line-height:12px;color:#4a4a4a;letter-spacing:0.050px;">Text to</span>
<span id="t34" class="t" style="left:780.80px;top:125.54px;font-size:12px;line-height:12px;color:#4a4a4a;letter-spacing:0.050px;">Columns</span>
<span id="t35" class="t" style="left:838.20px;top:109.64px;font-size:12px;line-height:12px;color:#4a4a4a;letter-spacing:-0.625px;">Flash</span>
<span id="t36" class="t" style="left:844.00px;top:125.54px;font-size:12px;line-height:12px;color:#4a4a4a;letter-spacing:-0.133px;">Fill</span>
<span id="t37" class="t" style="left:881.00px;top:109.64px;font-size:12px;line-height:12px;color:#4a4a4a;letter-spacing:-0.420px;">Remove</span>
<span id="t38" class="t" style="left:874.00px;top:125.54px;font-size:12px;line-height:12px;color:#4a4a4a;">Duplicates</span>
<span id="t39" class="t" style="left:954.00px;top:109.64px;font-size:12px;line-height:12px;color:#4a4a4a;letter-spacing:-0.167px;">Data</span>
<span id="t40" class="t" style="left:934.60px;top:125.54px;font-size:12px;line-height:12px;color:#4a4a4a;letter-spacing:0.300px;">Validation</span>
<span id="t41" class="t" style="left:1003.00px;top:109.64px;font-size:12px;line-height:12px;color:#4a4a4a;letter-spacing:-0.110px;">Consolidate</span>
<span id="t42" class="t" style="left:1154.40px;top:109.64px;font-size:12px;line-height:12px;color:#4a4a4a;">Manage</span>
<span id="t43" class="t" style="left:1144.80px;top:125.54px;font-size:12px;line-height:12px;color:#4a4a4a;letter-spacing:0.167px;">Data Model</span>
<span id="t44" class="t" style="left:1235.00px;top:109.64px;font-size:12px;line-height:12px;color:#4a4a4a;letter-spacing:0.250px;">What-If</span>
<span id="t45" class="t" style="left:1228.00px;top:125.54px;font-size:12px;line-height:12px;color:#4a4a4a;letter-spacing:-0.143px;">Analysis</span>
<span id="t46" class="t" style="left:1286.40px;top:109.64px;font-size:12px;line-height:12px;color:#4a4a4a;letter-spacing:-0.386px;">Forecast</span>
<span id="t47" class="t" style="left:1292.40px;top:125.54px;font-size:12px;line-height:12px;color:#4a4a4a;letter-spacing:0.050px;">Sheet</span>
<span id="t48" class="t" style="left:1353.00px;top:109.64px;font-size:12px;line-height:12px;color:#4a4a4a;letter-spacing:-0.075px;">Group</span>
<span id="t49" class="t" style="left:1392.60px;top:109.64px;font-size:12px;line-height:12px;color:#4a4a4a;letter-spacing:0.317px;">Ungroup</span>
<span id="t50" class="t" style="left:1444.00px;top:109.64px;font-size:12px;line-height:12px;color:#4a4a4a;letter-spacing:0.286px;">Subtotal</span>
<span id="t51" class="t" style="left:1070.20px;top:109.64px;font-size:12px;line-height:12px;color:#b3b3b3;letter-spacing:-0.150px;">Relationships</span>
<span id="t52" class="t" style="left:420.20px;top:77.74px;font-size:12px;line-height:12px;color:#4a4a4a;letter-spacing:0.025px;">Queries &amp; Connections</span>
<span id="t53" class="t" style="left:420.20px;top:101.34px;font-size:12px;line-height:12px;color:#b3b3b3;letter-spacing:-0.022px;">Properties</span>
<span id="t54" class="t" style="left:420.20px;top:125.44px;font-size:12px;line-height:12px;color:#b3b3b3;letter-spacing:-0.200px;">Edit Links</span>
<span id="t55" class="t" style="left:702.80px;top:77.44px;font-size:12px;line-height:12px;color:#b3b3b3;letter-spacing:-0.250px;">Clear</span>
<span id="t56" class="t" style="left:703.80px;top:101.14px;font-size:12px;line-height:12px;color:#b3b3b3;letter-spacing:-0.200px;">Reapply</span>
<span id="t57" class="t" style="left:703.80px;top:124.84px;font-size:12px;line-height:12px;color:#4a4a4a;letter-spacing:-0.057px;">Advanced</span>
<span id="t58" class="t" style="left:1513.40px;top:77.34px;font-size:12px;line-height:12px;color:#b3b3b3;">Show Detail</span>
<span id="t59" class="t" style="left:1513.40px;top:100.34px;font-size:12px;line-height:12px;color:#b3b3b3;">Hide Detail</span>
<span id="t60" class="t" style="left:122.00px;top:150.09px;font-size:11px;line-height:11px;color:#5c5c5c;letter-spacing:-0.258px;">Get &amp; Transform Data</span>
<span id="t61" class="t" style="left:398.20px;top:150.09px;font-size:11px;line-height:11px;color:#5c5c5c;letter-spacing:-0.300px;">Queries &amp; Connections</span>
<span id="t62" class="t" style="left:635.60px;top:150.09px;font-size:11px;line-height:11px;color:#5c5c5c;letter-spacing:-0.100px;">Sort &amp; Filter</span>
<span id="t63" class="t" style="left:968.40px;top:150.09px;font-size:11px;line-height:11px;color:#5c5c5c;letter-spacing:-0.211px;">Data Tools</span>
<span id="t64" class="t" style="left:1259.00px;top:150.09px;font-size:11px;line-height:11px;color:#5c5c5c;letter-spacing:-0.529px;">Forecast</span>
<span id="t65" class="t" style="left:1440.60px;top:150.09px;font-size:11px;line-height:11px;color:#5c5c5c;letter-spacing:-0.033px;">Outline</span>
<span id="t66" class="t" style="left:9.20px;top:179.00px;font-size:13px;line-height:13px;color:#333333;letter-spacing:0.400px;">A1</span>
<span id="t67" class="t" style="left:567.00px;top:341.77px;font-size:20px;line-height:20px;color:#4f9270;letter-spacing:-0.643px;">From Web</span>
<span id="t68" class="t" style="left:581.60px;top:374.54px;font-size:12px;line-height:12px;color:#444444;letter-spacing:-0.500px;">Basic</span>
<span id="t69" class="t" style="left:639.60px;top:374.54px;font-size:12px;line-height:12px;color:#444444;letter-spacing:-0.214px;">Advanced</span>
<span id="t70" class="t" style="left:566.80px;top:399.84px;font-size:12px;line-height:12px;color:#444444;letter-spacing:-1.100px;">URL</span>
<span id="t71" class="t" style="left:1097.60px;top:484.81px;font-size:10.5px;line-height:10.5px;color:#217346;letter-spacing:-1.100px;">OK</span>
<span id="t72" class="t" style="left:1162.00px;top:484.81px;font-size:10.5px;line-height:10.5px;color:#444444;letter-spacing:-0.340px;">Cancel</span>
</body></html>
